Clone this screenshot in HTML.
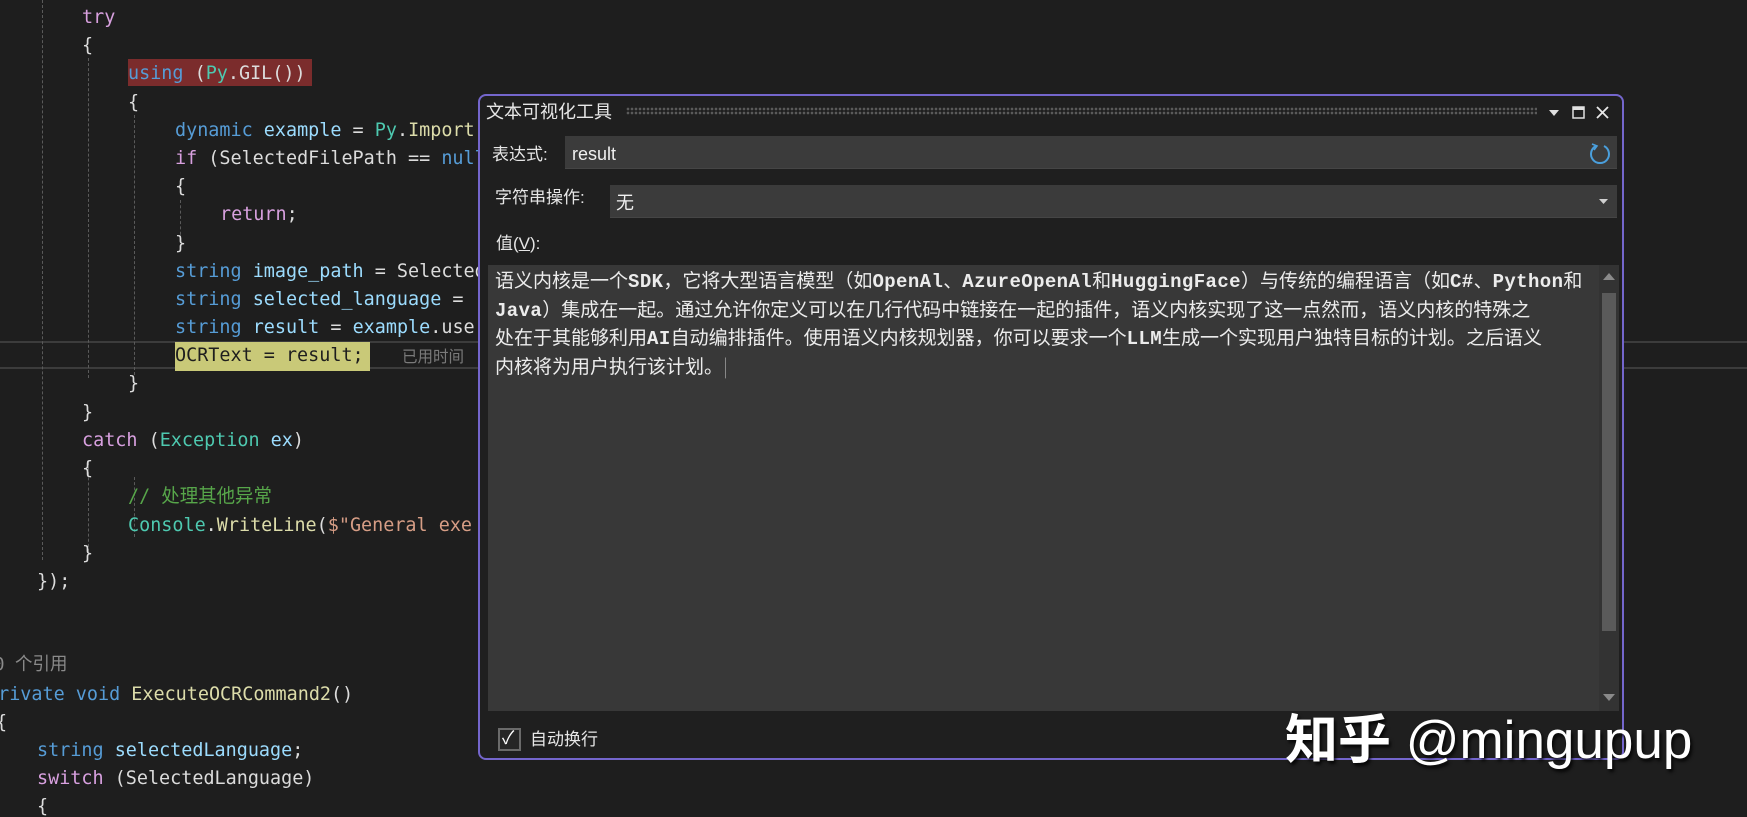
<!DOCTYPE html>
<html><head><meta charset="utf-8">
<style>
*{margin:0;padding:0;box-sizing:border-box}
html,body{width:1747px;height:817px;overflow:hidden;background:#1e1e1e}
body{position:relative;font-family:"Liberation Mono","Noto Sans CJK SC",monospace}
.ln{position:absolute;height:28px;line-height:28px;font-size:19px;white-space:pre;color:#dcdcdc;font-family:"DejaVu Sans Mono","Noto Sans CJK SC",monospace;transform:scaleX(0.97);transform-origin:left}
.k{color:#d8a0df}.b{color:#569cd6}.v{color:#9cdcfe}.t{color:#4ec9b0}.m{color:#dcdcaa}.s{color:#d69d85}.c{color:#57a64a}.g{color:#8a8a8a}
.hl{position:absolute;left:0;width:1747px;height:2px;background:#3c3c3c}
.dg{position:absolute;width:0;border-left:1px dashed #5a5a5a}
.dlg{position:absolute;left:478px;top:94px;width:1146px;height:666px;border:2px solid #7466cc;border-radius:8px;background:#1f1f1f;font-family:"Liberation Sans","Noto Sans CJK SC",sans-serif;color:#e8e8e8}
.lbl{position:absolute;font-size:17px;line-height:20px;color:#e6e6e6}
.box{position:absolute;background:#3b3b3b;border-bottom:1px solid #454545}
.ta{position:absolute;left:8px;top:169px;width:1131px;height:446px;background:#383838}
.tx{position:absolute;left:7px;top:2px;font-size:19px;line-height:25.5px;white-space:pre;color:#ececec;font-family:"Noto Sans CJK SC",sans-serif}
.tx i{font-style:normal;font-family:"Liberation Mono",monospace;font-size:19px;letter-spacing:0.4px;font-weight:bold}
</style></head><body>

<div class="hl" style="top:341px"></div>
<div class="hl" style="top:367px"></div>

<div class="dg" style="left:42px;top:0;height:560px"></div>
<div class="dg" style="left:88px;top:58px;height:320px"></div>
<div class="dg" style="left:88px;top:462px;height:90px"></div>
<div class="dg" style="left:134px;top:115px;height:260px"></div>
<div class="dg" style="left:134px;top:477px;height:60px"></div>
<div class="dg" style="left:180px;top:200px;height:40px"></div>

<div style="position:absolute;left:128px;top:59px;width:184px;height:27px;background:#7b2c2c"></div>
<div style="position:absolute;left:175px;top:342px;width:195px;height:29px;background:#c9c978"></div>

<div class="ln" style="left:82px;top:3px"><span class="k">try</span></div>
<div class="ln" style="left:82px;top:31px">{</div>
<div class="ln" style="left:128px;top:59px"><span class="b">using</span> (<span class="t">Py</span>.GIL())</div>
<div class="ln" style="left:128px;top:88px">{</div>
<div class="ln" style="left:175px;top:116px"><span class="b">dynamic</span> <span class="v">example</span> = <span class="t">Py</span>.<span class="m">Import</span></div>
<div class="ln" style="left:175px;top:144px"><span class="k">if</span> (SelectedFilePath == <span class="b">null</span></div>
<div class="ln" style="left:175px;top:172px">{</div>
<div class="ln" style="left:220px;top:200px"><span class="k">return</span>;</div>
<div class="ln" style="left:175px;top:229px">}</div>
<div class="ln" style="left:175px;top:257px"><span class="b">string</span> <span class="v">image_path</span> = Selected</div>
<div class="ln" style="left:175px;top:285px"><span class="b">string</span> <span class="v">selected_language</span> = </div>
<div class="ln" style="left:175px;top:313px"><span class="b">string</span> <span class="v">result</span> = <span class="v">example</span>.use</div>
<div class="ln" style="left:175px;top:341px;color:#1e1e1e">OCRText = <span style="color:#1e1e1e">result</span>;</div>
<div class="ln" style="left:402px;top:341px;font-size:16px;color:#7a7a7a;font-family:'Noto Sans CJK SC',sans-serif">已用时间</div>
<div class="ln" style="left:128px;top:369px">}</div>
<div class="ln" style="left:82px;top:398px">}</div>
<div class="ln" style="left:82px;top:426px"><span class="k">catch</span> (<span class="t">Exception</span> <span class="v">ex</span>)</div>
<div class="ln" style="left:82px;top:454px">{</div>
<div class="ln" style="left:128px;top:482px"><span class="c">// 处理其他异常</span></div>
<div class="ln" style="left:128px;top:511px"><span class="t">Console</span>.<span class="m">WriteLine</span>(<span class="s">$"General exe</span></div>
<div class="ln" style="left:82px;top:539px">}</div>
<div class="ln" style="left:37px;top:567px">});</div>
<div class="ln" style="left:-6px;top:651px;color:#8a8a8a;font-size:18px">0 个引用</div>
<div class="ln" style="left:-13px;top:680px"><span class="b">private</span> <span class="b">void</span> <span class="m">ExecuteOCRCommand2</span>()</div>
<div class="ln" style="left:-4px;top:708px">{</div>
<div class="ln" style="left:37px;top:736px"><span class="b">string</span> <span class="v">selectedLanguage</span>;</div>
<div class="ln" style="left:37px;top:764px"><span class="k">switch</span> (SelectedLanguage)</div>
<div class="ln" style="left:37px;top:792px">{</div>

<div class="dlg">
  <div class="lbl" style="left:6px;top:6px;font-size:18px">文本可视化工具</div>
  <div style="position:absolute;left:146px;top:11px;width:911px;height:8px;background-image:radial-gradient(circle,#5a5a5a 1.2px,transparent 1.5px);background-size:4px 4px"></div>
  <svg style="position:absolute;left:1066px;top:8px" width="70" height="18" viewBox="0 0 70 18">
    <path d="M3 6 L13 6 L8 12 Z" fill="#e0e0e0"/>
    <rect x="27" y="3" width="11" height="11" fill="none" stroke="#e0e0e0" stroke-width="1.5"/>
    <rect x="27" y="3" width="11" height="3" fill="#e0e0e0"/>
    <path d="M51 3 L62 14 M62 3 L51 14" stroke="#e8e8e8" stroke-width="1.8"/>
  </svg>

  <div class="lbl" style="left:12px;top:49px">表达式:</div>
  <div class="box" style="left:85px;top:40px;width:1052px;height:33px"></div>
  <div class="lbl" style="left:92px;top:48px;font-size:18px;color:#f0f0f0">result</div>
  <svg style="position:absolute;left:1108px;top:46px" width="24" height="24" viewBox="0 0 24 24">
    <path d="M8 4 A9 9 0 1 0 16 4" fill="none" stroke="#4a9fdc" stroke-width="2"/>
    <path d="M4 2 L9 4 L6 8" fill="none" stroke="#4a9fdc" stroke-width="1.6"/>
  </svg>

  <div class="lbl" style="left:15px;top:92px">字符串操作:</div>
  <div class="box" style="left:130px;top:89px;width:1007px;height:33px"></div>
  <div class="lbl" style="left:136px;top:97px;font-size:18px;color:#f0f0f0">无</div>
  <svg style="position:absolute;left:1119px;top:102px" width="10" height="8"><path d="M0 1 L9 1 L4.5 6 Z" fill="#d0d0d0"/></svg>

  <div class="lbl" style="left:16px;top:138px">值(<u>V</u>):</div>

  <div class="ta">
<div class="tx">语义内核是一个<i>SDK</i>，它将大型语言模型（如<i>OpenAl</i>、<i>AzureOpenAl</i>和<i>HuggingFace</i>）与传统的编程语言（如<i>C#</i>、<i>Python</i>和
<i>Java</i>）集成在一起。通过允许你定义可以在几行代码中链接在一起的插件，语义内核实现了这一点然而，语义内核的特殊之
处在于其能够利用<i>AI</i>自动编排插件。使用语义内核规划器，你可以要求一个<i>LLM</i>生成一个实现用户独特目标的计划。之后语义
内核将为用户执行该计划。<span style="color:#bbb;font-weight:100">|</span></div>
    <div style="position:absolute;right:0;top:0;width:20px;height:446px;background:#333"></div>
    <div style="position:absolute;right:3px;top:28px;width:14px;height:338px;background:#5a5a5a"></div>
    <svg style="position:absolute;right:4px;top:7px" width="12" height="10"><path d="M0 8 L12 8 L6 1 Z" fill="#8a8a8a"/></svg>
    <svg style="position:absolute;right:4px;bottom:8px" width="12" height="10"><path d="M0 1 L12 1 L6 8 Z" fill="#8a8a8a"/></svg>
  </div>

  <div style="position:absolute;left:18px;top:632px;width:23px;height:23px;border:2px solid #6a6a6a;background:#262626"></div>
  <div class="lbl" style="left:22px;top:632px;font-size:18px;color:#fff">✓</div>
  <div class="lbl" style="left:50px;top:634px">自动换行</div>
</div>

<div style="position:absolute;left:1285px;top:702px;font-size:53px;line-height:68px;color:#fff;white-space:nowrap;font-family:'Liberation Sans','Noto Sans CJK SC',sans-serif;text-shadow:2px 3px 3px rgba(0,0,0,0.8)"><span style="font-weight:bold;font-family:'Noto Sans CJK SC',sans-serif">知乎</span> @mingupup</div>

</body></html>
